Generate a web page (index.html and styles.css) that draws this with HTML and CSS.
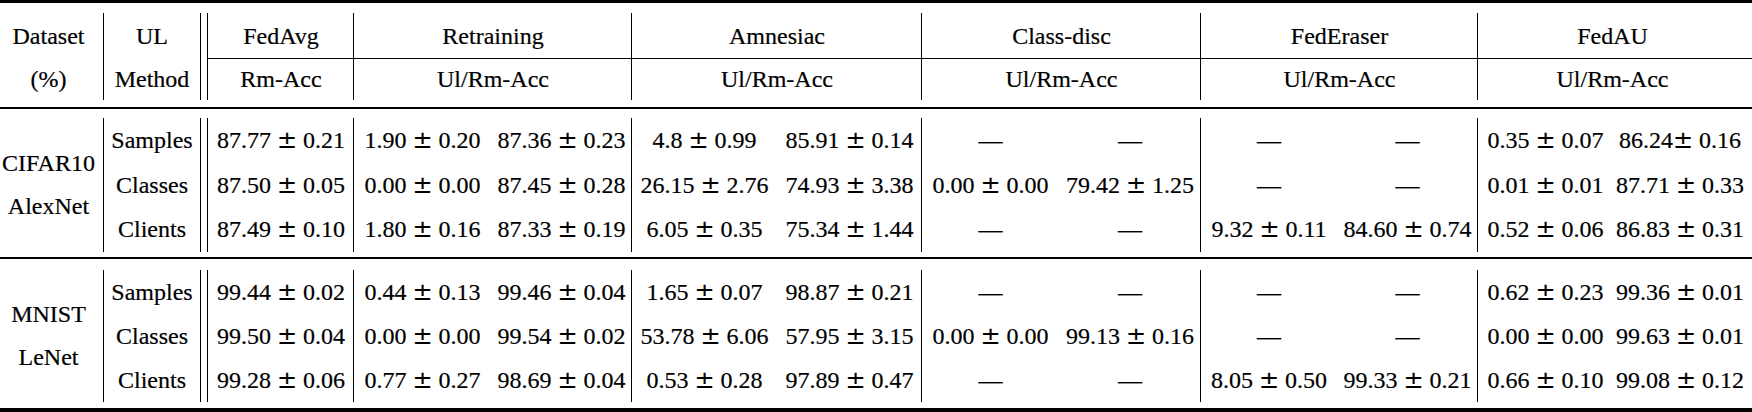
FILE: index.html
```html
<!DOCTYPE html>
<html lang="en">
<head>
    <meta charset="UTF-8">
    <meta name="viewport" content="width=device-width, initial-scale=1.0">
    <title>Unlearning Results</title>
    <link rel="stylesheet" href="styles.css">
</head>
<body>

    <table class="results">
        <colgroup>
            <col class="c-ds"><col class="c-ul"><col class="c-gap"><col class="c-avg">
            <col class="c-r1"><col class="c-r2">
            <col class="c-a1"><col class="c-a2">
            <col class="c-c1"><col class="c-c2">
            <col class="c-e1"><col class="c-e2">
            <col class="c-u1"><col class="c-u2">
        </colgroup>
        <thead>
            <tr class="pad-top"><td colspan="14"></td></tr>
            <tr class="head-a">
                <th class="ds">Dataset</th>
                <th class="ul">UL</th>
                <th class="gap"></th>
                <th class="grp cl">FedAvg</th>
                <th class="grp cl" colspan="2">Retraining</th>
                <th class="grp cl" colspan="2">Amnesiac</th>
                <th class="grp cl" colspan="2">Class-disc</th>
                <th class="grp cl" colspan="2">FedEraser</th>
                <th class="cl last" colspan="2">FedAU</th>
            </tr>
            <tr class="head-b">
                <th class="ds">(%)</th>
                <th class="ul">Method</th>
                <th class="gap"></th>
                <th class="grp">Rm-Acc</th>
                <th class="grp" colspan="2">Ul/Rm-Acc</th>
                <th class="grp" colspan="2">Ul/Rm-Acc</th>
                <th class="grp" colspan="2">Ul/Rm-Acc</th>
                <th class="grp" colspan="2">Ul/Rm-Acc</th>
                <th class="last" colspan="2">Ul/Rm-Acc</th>
            </tr>
            <tr class="sep sep-a"><td colspan="14"><div class="rule"></div></td></tr>
        </thead>
        <tbody>
            <tr class="row tall">
                <td class="ds" rowspan="3">CIFAR10<br>AlexNet</td>
                <td class="ul">Samples</td>
                <td class="gap"></td>
                <td class="grp">87.77 <span class="pm">±</span> 0.21</td>
                <td>1.90 <span class="pm">±</span> 0.20</td>
                <td class="grp">87.36 <span class="pm">±</span> 0.23</td>
                <td>4.8 <span class="pm">±</span> 0.99</td>
                <td class="grp">85.91 <span class="pm">±</span> 0.14</td>
                <td>—</td>
                <td class="grp">—</td>
                <td>—</td>
                <td class="grp">—</td>
                <td>0.35 <span class="pm">±</span> 0.07</td>
                <td class="last">86.24<span class="pm">±</span> 0.16</td>
            </tr>
            <tr class="row">
                <td class="ul">Classes</td>
                <td class="gap"></td>
                <td class="grp">87.50 <span class="pm">±</span> 0.05</td>
                <td>0.00 <span class="pm">±</span> 0.00</td>
                <td class="grp">87.45 <span class="pm">±</span> 0.28</td>
                <td>26.15 <span class="pm">±</span> 2.76</td>
                <td class="grp">74.93 <span class="pm">±</span> 3.38</td>
                <td>0.00 <span class="pm">±</span> 0.00</td>
                <td class="grp">79.42 <span class="pm">±</span> 1.25</td>
                <td>—</td>
                <td class="grp">—</td>
                <td>0.01 <span class="pm">±</span> 0.01</td>
                <td class="last">87.71 <span class="pm">±</span> 0.33</td>
            </tr>
            <tr class="row tall">
                <td class="ul">Clients</td>
                <td class="gap"></td>
                <td class="grp">87.49 <span class="pm">±</span> 0.10</td>
                <td>1.80 <span class="pm">±</span> 0.16</td>
                <td class="grp">87.33 <span class="pm">±</span> 0.19</td>
                <td>6.05 <span class="pm">±</span> 0.35</td>
                <td class="grp">75.34 <span class="pm">±</span> 1.44</td>
                <td>—</td>
                <td class="grp">—</td>
                <td>9.32 <span class="pm">±</span> 0.11</td>
                <td class="grp">84.60 <span class="pm">±</span> 0.74</td>
                <td>0.52 <span class="pm">±</span> 0.06</td>
                <td class="last">86.83 <span class="pm">±</span> 0.31</td>
            </tr>
            <tr class="sep sep-b"><td colspan="14"><div class="rule"></div></td></tr>
            <tr class="row">
                <td class="ds" rowspan="3">MNIST<br>LeNet</td>
                <td class="ul">Samples</td>
                <td class="gap"></td>
                <td class="grp">99.44 <span class="pm">±</span> 0.02</td>
                <td>0.44 <span class="pm">±</span> 0.13</td>
                <td class="grp">99.46 <span class="pm">±</span> 0.04</td>
                <td>1.65 <span class="pm">±</span> 0.07</td>
                <td class="grp">98.87 <span class="pm">±</span> 0.21</td>
                <td>—</td>
                <td class="grp">—</td>
                <td>—</td>
                <td class="grp">—</td>
                <td>0.62 <span class="pm">±</span> 0.23</td>
                <td class="last">99.36 <span class="pm">±</span> 0.01</td>
            </tr>
            <tr class="row">
                <td class="ul">Classes</td>
                <td class="gap"></td>
                <td class="grp">99.50 <span class="pm">±</span> 0.04</td>
                <td>0.00 <span class="pm">±</span> 0.00</td>
                <td class="grp">99.54 <span class="pm">±</span> 0.02</td>
                <td>53.78 <span class="pm">±</span> 6.06</td>
                <td class="grp">57.95 <span class="pm">±</span> 3.15</td>
                <td>0.00 <span class="pm">±</span> 0.00</td>
                <td class="grp">99.13 <span class="pm">±</span> 0.16</td>
                <td>—</td>
                <td class="grp">—</td>
                <td>0.00 <span class="pm">±</span> 0.00</td>
                <td class="last">99.63 <span class="pm">±</span> 0.01</td>
            </tr>
            <tr class="row">
                <td class="ul">Clients</td>
                <td class="gap"></td>
                <td class="grp">99.28 <span class="pm">±</span> 0.06</td>
                <td>0.77 <span class="pm">±</span> 0.27</td>
                <td class="grp">98.69 <span class="pm">±</span> 0.04</td>
                <td>0.53 <span class="pm">±</span> 0.28</td>
                <td class="grp">97.89 <span class="pm">±</span> 0.47</td>
                <td>—</td>
                <td class="grp">—</td>
                <td>8.05 <span class="pm">±</span> 0.50</td>
                <td class="grp">99.33 <span class="pm">±</span> 0.21</td>
                <td>0.66 <span class="pm">±</span> 0.10</td>
                <td class="last">99.08 <span class="pm">±</span> 0.12</td>
            </tr>
            <tr class="pad-bottom"><td colspan="14"></td></tr>
        </tbody>
    </table>

</body>
</html>
```

FILE: styles.css
```css
body {
    margin: 0;
    padding: 0;
    background-color: #fff;
    color: #000;
    font-family: "Liberation Serif", "Times New Roman", serif;
    font-size: 24px;
}
.results {
    width: 1752px;
    table-layout: fixed;
    border-collapse: separate;
    border-spacing: 0;
    border-top: 3px solid #000;
    border-bottom: 4px solid #000;
    font-family: "Liberation Serif", "Times New Roman", serif;
    -webkit-text-stroke: 0.2px #000;
}
.c-ds { width: 104px; }
.c-ul { width: 96px; }
.c-gap { width: 8px; }
.c-avg { width: 146px; }
.c-r1 { width: 137px; }
.c-r2 { width: 141px; }
.c-a1 { width: 145px; }
.c-a2 { width: 145px; }
.c-c1 { width: 137px; }
.c-c2 { width: 142px; }
.c-e1 { width: 136px; }
.c-e2 { width: 141px; }
.c-u1 { width: 135px; }
.c-u2 { width: 139px; }
.results th, .results td {
    padding: 0;
    text-align: center;
    vertical-align: middle;
    font-weight: normal;
    white-space: nowrap;
    line-height: 27px;
}
.pad-top td {
    height: 10px;
}
.pad-bottom td {
    height: 6px;
}
.head-a th {
    height: 46px;
}
.head-b th {
    height: 41px;
}
.row {
    height: 44px;
}
.row.tall {
    height: 45px;
}
.results td.ds, .results th.ds {
    padding-right: 7px;
    box-shadow: inset -1px 0 #000;
}
.results td.ds {
    line-height: 43px;
}
.gap {
    box-shadow: inset 1px 0 #000, inset -1px 0 #000;
}
.grp {
    box-shadow: inset -1px 0 #000;
}
.cl {
    box-shadow: inset 0 -1px #000;
}
.grp.cl {
    box-shadow: inset -1px 0 #000, inset 0 -1px #000;
}
.results .last {
    padding-right: 5px;
}
.pm {
    font-family: "DejaVu Serif", serif;
    line-height: 0;
}
.rule {
    height: 2px;
    background-color: #000;
}
.sep-a .rule {
    margin: 7px 0 9px;
}
.sep-b .rule {
    margin: 5px 0 11px;
}
```
